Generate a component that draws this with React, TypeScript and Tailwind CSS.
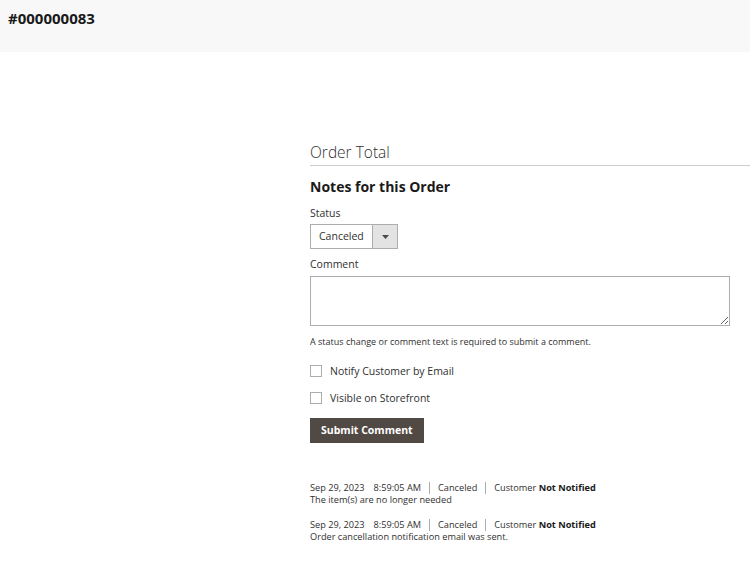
import { useState } from 'react';

const HISTORY = [
  { date: 'Sep 29, 2023', time: '8:59:05 AM', status: 'Canceled', note: 'The item(s) are no longer needed' },
  { date: 'Sep 29, 2023', time: '8:59:05 AM', status: 'Canceled', note: 'Order cancellation notification email was sent.' },
];

export default function App() {
  const [status, setStatus] = useState('canceled');
  const [comment, setComment] = useState('');

  return (
    <div className="min-h-[561px] bg-white text-[#303030]" style={{ fontFamily: '"Open Sans", "Liberation Sans", sans-serif' }}>
      <header className="h-[52px] bg-[#f8f8f8] px-2 pt-[7px]">
        <h1 className="text-[15px] font-bold leading-[22px] text-[#1a1a1a]">#000000083</h1>
      </header>

      <div className="flex">
        <div className="w-[310px] shrink-0" />
        <div className="flex-1 pt-[89px]">
          <h2 className="text-[15.5px] font-light leading-[22px] text-[#303030] border-b border-[#cccccc] pb-[2px]">Order Total</h2>

          <div className="pr-5">
            <h3 className="mt-[11px] text-[14px] font-bold leading-[20px] text-[#1a1a1a]">Notes for this Order</h3>

            <label className="mt-[8px] block text-[10.5px] leading-[16px]">Status</label>
            <div className="relative mt-[3px] inline-flex h-[25px] w-[88px] border border-[#adadad] bg-white">
              <select
                value={status}
                onChange={(e) => setStatus(e.target.value)}
                className="h-full w-full appearance-none bg-transparent pl-2 text-[10.5px] outline-none"
              >
                <option value="canceled">Canceled</option>
              </select>
              <span className="pointer-events-none absolute right-0 top-0 flex h-full w-[25px] items-center justify-center border-l border-[#adadad] bg-[#e3e3e3]">
                <svg width="7" height="4" viewBox="0 0 7 4"><path d="M0 0h7L3.5 4z" fill="#514943" /></svg>
              </span>
            </div>

            <label className="mt-[7px] block text-[10.5px] leading-[16px]">Comment</label>
            <textarea
              value={comment}
              onChange={(e) => setComment(e.target.value)}
              className="mt-[4px] block h-[50px] w-full border border-[#adadad] text-[10.5px] outline-none"
            />

            <p className="mt-[9px] text-[9px] leading-[14px]">A status change or comment text is required to submit a comment.</p>

            <label className="mt-[14px] flex items-center gap-[8px] text-[10.5px] leading-[16px]">
              <span className="h-[12px] w-[12px] border border-[#adadad] bg-white" />
              Notify Customer by Email
            </label>
            <label className="mt-[11px] flex items-center gap-[8px] text-[10.5px] leading-[16px]">
              <span className="h-[12px] w-[12px] border border-[#adadad] bg-white" />
              Visible on Storefront
            </label>

            <button className="mt-[12px] h-[25px] bg-[#514943] px-[11px] text-[10.5px] font-bold text-white">Submit Comment</button>

            <ul className="mt-[39px] flex flex-col gap-[13px]">
              {HISTORY.map((h, i) => (
                <li key={i} className="text-[9.2px] leading-[12px]">
                  <div className="flex items-center">
                    <span>{h.date}</span>
                    <span className="ml-[9px] pr-2">{h.time}</span>
                    <span className="border-l border-[#adadad] px-2">{h.status}</span>
                    <span className="border-l border-[#adadad] pl-2">Customer <b className="text-[#1a1a1a]">Not Notified</b></span>
                  </div>
                  <div>{h.note}</div>
                </li>
              ))}
            </ul>
          </div>
        </div>
      </div>
    </div>
  );
}
